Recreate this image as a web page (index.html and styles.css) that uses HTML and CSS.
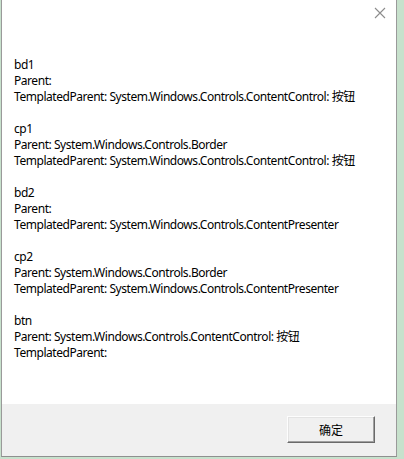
FILE: index.html
```html
<!DOCTYPE html>
<html lang="en">
<head>
    <meta charset="UTF-8">
    <title>Message</title>
    <link rel="stylesheet" href="styles.css">
</head>
<body>
    <div class="window">
        <div class="content">
            <div class="title-bar">
                <span class="close-button">
                    <svg width="12" height="12" viewBox="0 0 12 12">
                        <path d="M1 1 L11 11 M11 1 L1 11" stroke="#8c8c8c" stroke-width="1.1"/>
                    </svg>
                </span>
            </div>

            <div class="message">
                <p>bd1</p>
                <p>Parent:</p>
                <p>TemplatedParent: System.Windows.Controls.ContentControl: 按钮</p>
                <p class="blank"></p>
                <p>cp1</p>
                <p>Parent: System.Windows.Controls.Border</p>
                <p>TemplatedParent: System.Windows.Controls.ContentControl: 按钮</p>
                <p class="blank"></p>
                <p>bd2</p>
                <p>Parent:</p>
                <p>TemplatedParent: System.Windows.Controls.ContentPresenter</p>
                <p class="blank"></p>
                <p>cp2</p>
                <p>Parent: System.Windows.Controls.Border</p>
                <p>TemplatedParent: System.Windows.Controls.ContentPresenter</p>
                <p class="blank"></p>
                <p>btn</p>
                <p>Parent: System.Windows.Controls.ContentControl: 按钮</p>
                <p>TemplatedParent:</p>
            </div>
        </div>

        <div class="footer">
            <button class="ok-button">确定</button>
        </div>
    </div>
</body>
</html>
```

FILE: styles.css
```css
body{
    margin: 0;
    background-color: #c7e1cc;
    font-family: "Noto Sans", "Noto Sans CJK SC", sans-serif;
    font-size: 12px;
    color: #000;
}

.window{
    margin-left: 1px;
    width: 394px;
    height: 456px;
    border-left: 1px solid #9a9a9a;
    border-right: 1px solid #9a9a9a;
    border-bottom: 1px solid #8f8f8f;
    background-color: #f0f0f0;
    display: flex;
    flex-direction: column;
}

.content{
    background-color: white;
    height: 404px;
}

.title-bar{
    height: 24px;
    display: flex;
    justify-content: flex-end;
    align-items: center;
    padding-right: 10px;
}

.close-button{
    display: flex;
    margin-top: 1px;
}

.message{
    padding: 33px 0 0 12px;
    letter-spacing: -0.45px;
}

.message p{
    margin: 0;
    height: 16px;
    line-height: 16px;
    white-space: nowrap;
}

.footer{
    flex: 1;
    display: flex;
    justify-content: flex-end;
    align-items: flex-start;
    padding: 12px 21px 0 0;
}

.ok-button{
    width: 88px;
    height: 27px;
    background-color: #f0f0f0;
    border: 1px solid;
    border-color: #fdfdfd #6a6a6a #6a6a6a #fdfdfd;
    box-shadow: inset -1px -1px 0 #a0a0a0, inset 1px 1px 0 #e3e3e3;
    font-family: "Noto Sans CJK SC", sans-serif;
    font-size: 12px;
    padding: 0;
}
```
